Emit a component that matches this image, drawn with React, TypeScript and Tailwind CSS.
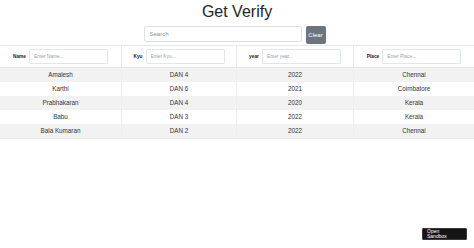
const rows = [
  { name: "Amalesh", kyu: "DAN 4", year: "2022", place: "Chennai" },
  { name: "Karthi", kyu: "DAN 6", year: "2021", place: "Coimbatore" },
  { name: "Prabhakaran", kyu: "DAN 4", year: "2020", place: "Kerala" },
  { name: "Babu", kyu: "DAN 3", year: "2022", place: "Kerala" },
  { name: "Bala Kumaran", kyu: "DAN 2", year: "2022", place: "Chennai" },
];

const filters = [
  { label: "Name", placeholder: "Enter Name..." },
  { label: "Kyu", placeholder: "Enter Kyu..." },
  { label: "year", placeholder: "Enter year..." },
  { label: "Place", placeholder: "Enter Place..." },
];

export default function App() {
  return (
    <div className="relative min-h-[248px] bg-white text-[#212529] font-['Liberation_Sans',Arial,sans-serif]">
      <h1 className="h-[26px] pt-[2px] text-center text-[16px] leading-[20px] font-normal">
        Get Verify
      </h1>

      <div className="flex h-[19px] items-start justify-center gap-[4px] pr-[5px]">
        <input
          className="h-[16px] w-[158px] rounded-[2px] border border-[#dcdfe3] px-[5px] text-[6px] outline-none placeholder:text-[#8a9096]"
          placeholder="Search"
        />
        <button className="h-[18px] w-[20px] rounded-[2px] bg-[#6c757d] text-[6px] text-white">
          Clear
        </button>
      </div>

      <div className="grid grid-cols-[121px_115px_117px_121px] border-y border-[#e6e8ea]">
        {filters.map((f, i) => (
          <div
            key={f.label}
            className={`flex h-[21px] items-center justify-center gap-[3px] ${i > 0 ? "border-l border-[#e6e8ea]" : ""}`}
          >
            <span className="text-[4.8px] font-bold">{f.label}</span>
            <input
              className="h-[15px] w-[79px] rounded-[1px] border border-[#e3e6e9] px-[4px] text-[4.8px] outline-none placeholder:text-[#9aa0a6]"
              placeholder={f.placeholder}
            />
          </div>
        ))}
      </div>

      <div className="border-b border-[#e6e8ea]">
        {rows.map((r, i) => (
          <div
            key={r.name}
            className={`grid h-[14px] grid-cols-[121px_115px_117px_121px] text-[6.3px] text-[#333] ${i % 2 === 0 ? "bg-[#f2f2f2]" : "bg-white"}`}
          >
            {[r.name, r.kyu, r.year, r.place].map((v, j) => (
              <div
                key={j}
                className={`flex items-center justify-center ${j > 0 ? "border-l border-[#eeeeee]" : ""}`}
              >
                {v}
              </div>
            ))}
          </div>
        ))}
      </div>

      <button className="absolute bottom-[8px] right-[7px] flex h-[12px] w-[45px] flex-col items-start justify-center rounded-[1px] border border-[#3a3a3a] bg-[#151515] pl-[4px] text-left text-[5px] leading-[5px] text-white">
        <span>Open</span>
        <span>Sandbox</span>
      </button>
    </div>
  );
}
